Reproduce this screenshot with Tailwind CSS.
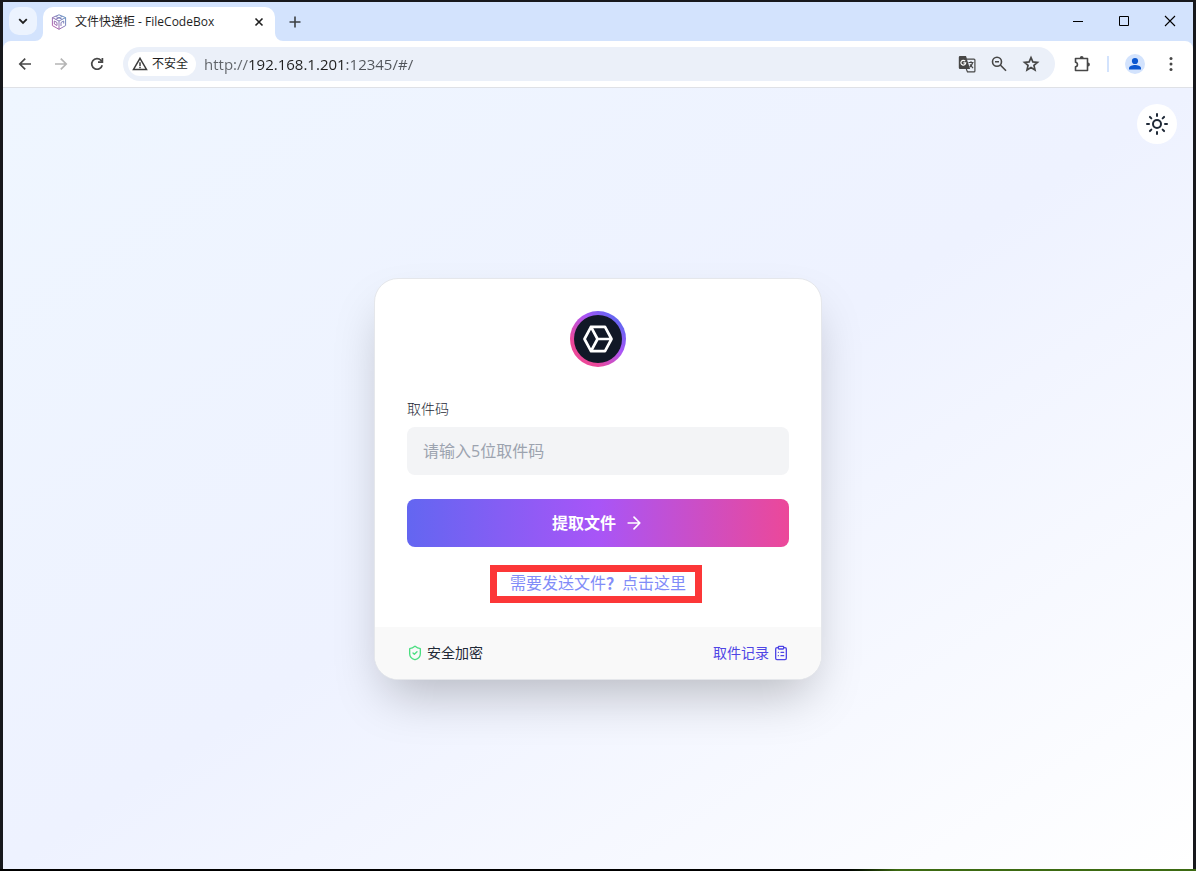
<!DOCTYPE html>
<html lang="zh-CN">
<head>
    <meta charset="UTF-8">
    <meta name="viewport" content="width=device-width, initial-scale=1.0">
    <title>文件快递柜 - FileCodeBox</title>
    <script src="https://cdn.jsdelivr.net/npm/@tailwindcss/browser@4"></script>
</head>
<body class="min-h-screen flex flex-col bg-[#17181c] font-['Open_Sans','Noto_Sans_CJK_SC',sans-serif]">
    <div class="flex-1 flex flex-col mx-[3px] mt-0.5">

        <!-- Tab strip -->
        <header class="bg-[#d3e3fd]">
            <div class="flex items-start h-[39px] pt-[5px] pl-1.5">
                <button aria-label="搜索标签页" class="w-7 h-7 rounded-[10px] bg-[#ecf3fe] flex items-center justify-center text-[#1f1f1f]">
                    <svg class="w-3 h-3" viewBox="0 0 12 12" fill="none" stroke="currentColor" stroke-width="1.8"><path d="M2.2 4.2 6 8l3.8-3.8"/></svg>
                </button>
                <div class="relative ml-1.5 w-[232px] h-[34px] bg-white rounded-t-[10px] flex items-center pl-2 pr-2.5 pb-1">
                    <svg class="absolute bottom-0 -left-2 w-2 h-2 text-white" viewBox="0 0 8 8" fill="currentColor"><path d="M8 0v8H0a8 8 0 0 0 8-8z"/></svg>
                    <svg class="absolute bottom-0 -right-2 w-2 h-2 text-white" viewBox="0 0 8 8" fill="currentColor"><path d="M0 0v8h8a8 8 0 0 1-8-8z"/></svg>
                    <svg class="w-4 h-4 shrink-0" viewBox="0 0 16 16" fill="none" stroke="url(#fav)" stroke-width="1">
                        <defs><linearGradient id="fav" x1="0" y1="1" x2="1" y2="0"><stop stop-color="#c05aa8"/><stop offset=".5" stop-color="#8a7ab8"/><stop offset="1" stop-color="#5f96c5"/></linearGradient></defs>
                        <path d="M8 .8 14.6 3.600v8L8 15.300 1.400 11.600v-8zM1.400 3.600 8 7l6.600-3.400M8 7v8.300M4.600 2.400 11.300 5.300M11.300 2.400 4.600 5.300M3.300 7l2.700 1.500v3L3.300 10zM10 12V8.500L12.700 7v2.500"/>
                    </svg>
                    <span class="ml-2 flex-1 text-xs text-[#1f1f1f] whitespace-nowrap">文件快递柜 - FileCodeBox</span>
                    <button aria-label="关闭标签页" class="w-3 h-3 text-[#1f1f1f]">
                        <svg viewBox="0 0 12 12" fill="none" stroke="currentColor" stroke-width="1.6"><path d="m2.5 2.5 7 7M9.5 2.5l-7 7"/></svg>
                    </button>
                </div>
                <button aria-label="新标签页" class="ml-[13px] mt-2 w-3.5 h-3.5 text-[#3c4043]">
                    <svg viewBox="0 0 14 14" fill="none" stroke="currentColor" stroke-width="1.6"><path d="M7 1.5v11M1.5 7h11"/></svg>
                </button>
                <div class="ml-auto flex text-black">
                    <button aria-label="最小化" class="w-[46px] h-7 flex items-center justify-center">
                        <svg class="w-3 h-3" viewBox="0 0 12 12" fill="none" stroke="currentColor"><path d="M1 6.5h10"/></svg>
                    </button>
                    <button aria-label="最大化" class="w-[46px] h-7 flex items-center justify-center">
                        <svg class="w-3 h-3" viewBox="0 0 12 12" fill="none" stroke="currentColor"><path d="M1.5 1.5h9v9h-9z"/></svg>
                    </button>
                    <button aria-label="关闭" class="w-[46px] h-7 flex items-center justify-center">
                        <svg class="w-3 h-3" viewBox="0 0 12 12" fill="none" stroke="currentColor" stroke-width="1.1"><path d="m1 1 10 10M11 1 1 11"/></svg>
                    </button>
                </div>
            </div>

            <!-- Toolbar -->
            <div class="h-[47px] bg-white rounded-t-lg border-b border-[#dfe1e6] flex items-center px-3.5 text-[#474747]">
                <button aria-label="后退" class="w-4 h-4">
                    <svg viewBox="0 0 16 16" fill="none" stroke="currentColor" stroke-width="1.7"><path d="M14 8H3M8.2 2.6 2.8 8l5.4 5.4"/></svg>
                </button>
                <button aria-label="前进" class="w-4 h-4 ml-5 text-[#b5b5b5]">
                    <svg viewBox="0 0 16 16" fill="none" stroke="currentColor" stroke-width="1.7"><path d="M2 8h11M7.8 2.6 13.2 8l-5.4 5.4"/></svg>
                </button>
                <button aria-label="重新加载" class="w-4 h-4 ml-5">
                    <svg viewBox="0 0 16 16" fill="none" stroke="currentColor" stroke-width="1.7"><path d="M13.2 9.2A5.3 5.3 0 1 1 12 4.4l1 1.1"/><path d="M13.4 1.9v4.3H9"/></svg>
                </button>
                <div class="ml-[18px] flex-1 h-[34px] rounded-full bg-[#ebf0f9] flex items-center pl-[5px] pr-[15px]">
                    <button class="h-6 rounded-full bg-white flex items-center pl-1 pr-2 gap-1 text-xs text-[#1f1f1f]">
                        <svg class="w-4 h-4 text-[#3c3c3c]" viewBox="0 0 16 16" fill="none" stroke="currentColor" stroke-width="1.5"><path d="M8 2.3 14.5 13.4h-13z"/><path d="M8 6.3v3.6M8 10.8v1.4"/></svg>
                        不安全
                    </button>
                    <!-- host part of the address is darker than the rest -->
                    <input type="text" aria-label="地址" value="http://192.168.1.201:12345/#/"
                        class="ml-2 flex-1 h-6 text-[15px] text-transparent bg-clip-text bg-[linear-gradient(to_right,#5f6368_44px,#1f1f1f_44px,#1f1f1f_142px,#50545a_142px)] outline-none">
                    <div class="flex items-center gap-3.5">
                        <button aria-label="翻译此页" class="w-[18px] h-[18px]">
                            <svg viewBox="0 0 18 18"><path fill="currentColor" d="M2 1h6l1 3h-.2l3.3 10H2a1.2 1.2 0 0 1-1.2-1.2V2.2A1.2 1.2 0 0 1 2 1z"/><path fill="none" stroke="currentColor" stroke-width="1.2" d="M8.5 4.1H16a.9.9 0 0 1 .9.9v11a.9.9 0 0 1-.9.9H9.500L8.300 14M10.500 7.500h5M13 6.300v1.200M14.700 7.500c-.5 2-1.600 3.600-3.200 4.800M12 9.500l3 3.600"/><path fill="none" stroke="#fff" stroke-width="1.2" d="M7.200 6.200a2.400 2.400 0 1 0 .5 1.700H5.400"/></svg>
                        </button>
                        <button aria-label="缩放" class="w-[18px] h-[18px]">
                            <svg viewBox="0 0 18 18" fill="none" stroke="currentColor" stroke-width="1.6"><circle cx="7" cy="6.7" r="4.5"/><path d="m10.3 10 5.7 5.8M5 6.7h4"/></svg>
                        </button>
                        <button aria-label="添加书签" class="w-[18px] h-[18px]">
                            <svg viewBox="0 0 18 18" fill="none" stroke="currentColor" stroke-width="1.7"><path d="m9 2.7 1.85 4.25 4.6.4-3.5 3.05 1.05 4.5L9 12.5l-4 2.4 1.05-4.5-3.5-3.05 4.6-.4z"/></svg>
                        </button>
                    </div>
                </div>
                <button aria-label="扩展程序" class="w-[18px] h-[18px] ml-[18px]">
                    <svg viewBox="0 0 18 18" fill="none" stroke="currentColor" stroke-width="1.6" stroke-linejoin="round"><path d="M2.500 3.500h12v12h-12v-3.600c2.600-.4 2.600-4.300 0-4.700z"/><path fill="currentColor" stroke="none" d="M6.800 3a1.900 1.900 0 0 1 3.800 0zM15 7.600a1.900 1.900 0 0 1 0 3.800z"/></svg>
                </button>
                <span class="w-0.5 h-4 ml-4 bg-[#d3e3fd]"></span>
                <button aria-label="个人资料" class="w-5 h-5 ml-4 rounded-full bg-[#d3e3fd] text-[#0b57d0]">
                    <svg viewBox="0 0 20 20" fill="currentColor"><circle cx="10" cy="7" r="3.1"/><path d="M4 15.500v-1.300c0-2 3.500-3.200 6-3.200s6 1.200 6 3.200v1.300z"/></svg>
                </button>
                <button aria-label="更多" class="w-4 h-4 ml-[18px]">
                    <svg viewBox="0 0 16 16" fill="currentColor"><circle cx="8" cy="2.6" r="1.5"/><circle cx="8" cy="8" r="1.5"/><circle cx="8" cy="13.4" r="1.5"/></svg>
                </button>
            </div>
        </header>

        <!-- Page -->
        <main class="relative flex-1 flex items-center justify-center bg-linear-to-br/srgb from-[#eff6ff] via-[#eef2ff] to-white">
            <button aria-label="切换主题" class="absolute top-4 right-4 w-10 h-10 rounded-full bg-white flex items-center justify-center text-[#1f2937]">
                <svg class="w-6 h-6" viewBox="0 0 24 24" fill="none" stroke="currentColor" stroke-width="2" stroke-linecap="round"><circle cx="12" cy="12" r="4"/><path d="M12 2v2M12 20v2M4.930 4.930l1.410 1.410M17.660 17.660l1.410 1.410M2 12h2M20 12h2M6.340 17.660l-1.410 1.410M19.070 4.930l-1.410 1.410"/></svg>
            </button>

            <div class="w-full max-w-md rounded-3xl border border-gray-200 bg-white shadow-2xl overflow-hidden">
                <div class="p-8">
                    <div class="w-14 h-14 mx-auto mb-8 rounded-full p-1 bg-linear-to-tr/srgb from-[#ec4899] from-25% via-[#a855f7] via-60% to-[#6366f1] to-85%">
                        <div class="w-full h-full rounded-full bg-[#111827] flex items-center justify-center">
                            <svg class="w-8 h-8 text-white" viewBox="-16 -16 32 32" fill="none" stroke="currentColor" stroke-width="2.7" stroke-linejoin="round" stroke-linecap="round"><path d="M-13.500 0-7-12.200H7L13.500 0 7 12.200H-7zM-7-12.200-.5 0-7 12.200M-.5 0h14"/></svg>
                        </div>
                    </div>
                    <form id="retrieveForm">
                        <label for="code" class="block mb-2 text-sm font-light text-[#1f2937]">取件码</label>
                        <input type="text" id="code" maxlength="5"
                            class="block w-full h-12 px-4 mb-6 rounded-lg bg-[#f3f4f6] text-base text-[#1f2937] placeholder:text-[#9ca3af] focus:outline-none"
                            placeholder="请输入5位取件码">
                        <button type="submit" class="w-full h-12 rounded-lg bg-linear-to-r/srgb from-[#6366f1] via-[#a855f7] to-[#ec4899] text-white font-bold flex items-center justify-center gap-2">
                            提取文件
                            <svg class="w-5 h-5" viewBox="0 0 24 24" fill="none" stroke="currentColor" stroke-width="2" stroke-linecap="round" stroke-linejoin="round"><path d="M5 12h14M12 5l7 7-7 7"/></svg>
                        </button>
                    </form>
                    <div class="mt-6 flex justify-center">
                        <a href="#/send" class="relative text-base text-[#818cf8]">
                            需要发送文件<span class="font-bold">？</span>点击这里
                            <span class="absolute -top-1.5 -bottom-2 -left-5 -right-4 border-[7px] border-[#fc3738]"></span>
                        </a>
                    </div>
                </div>
                <div class="px-8 py-4 bg-[#f9f9f9] flex items-center justify-between text-sm">
                    <span class="flex items-center gap-1 text-[#1f2937]">
                        <svg class="w-4 h-4 text-[#4ade80]" viewBox="0 0 24 24" fill="none" stroke="currentColor" stroke-width="2" stroke-linecap="round" stroke-linejoin="round"><path d="M20 13c0 5-3.500 7.500-7.660 8.950a1 1 0 0 1-.67-.01C7.500 20.500 4 18 4 13V6a1 1 0 0 1 1-1c2 0 4.500-1.200 6.240-2.720a1.170 1.170 0 0 1 1.520 0C14.510 3.810 17 5 19 5a1 1 0 0 1 1 1z"/><path d="m9 12 2 2 4-4"/></svg>
                        安全加密
                    </span>
                    <button class="flex items-center gap-1 text-[#4f46e5]">
                        取件记录
                        <svg class="w-4 h-4" viewBox="0 0 24 24" fill="none" stroke="currentColor" stroke-width="2" stroke-linecap="round" stroke-linejoin="round"><rect x="8" y="2" width="8" height="4" rx="1"/><path d="M16 4h2a2 2 0 0 1 2 2v14a2 2 0 0 1-2 2H6a2 2 0 0 1-2-2V6a2 2 0 0 1 2-2h2M12 11h4M12 16h4M8 11h.01M8 16h.01"/></svg>
                    </button>
                </div>
            </div>
        </main>
    </div>
    <div class="h-0.5 bg-linear-to-r from-black from-70% to-[#3c6a12] to-75%"></div>
</body>
</html>
